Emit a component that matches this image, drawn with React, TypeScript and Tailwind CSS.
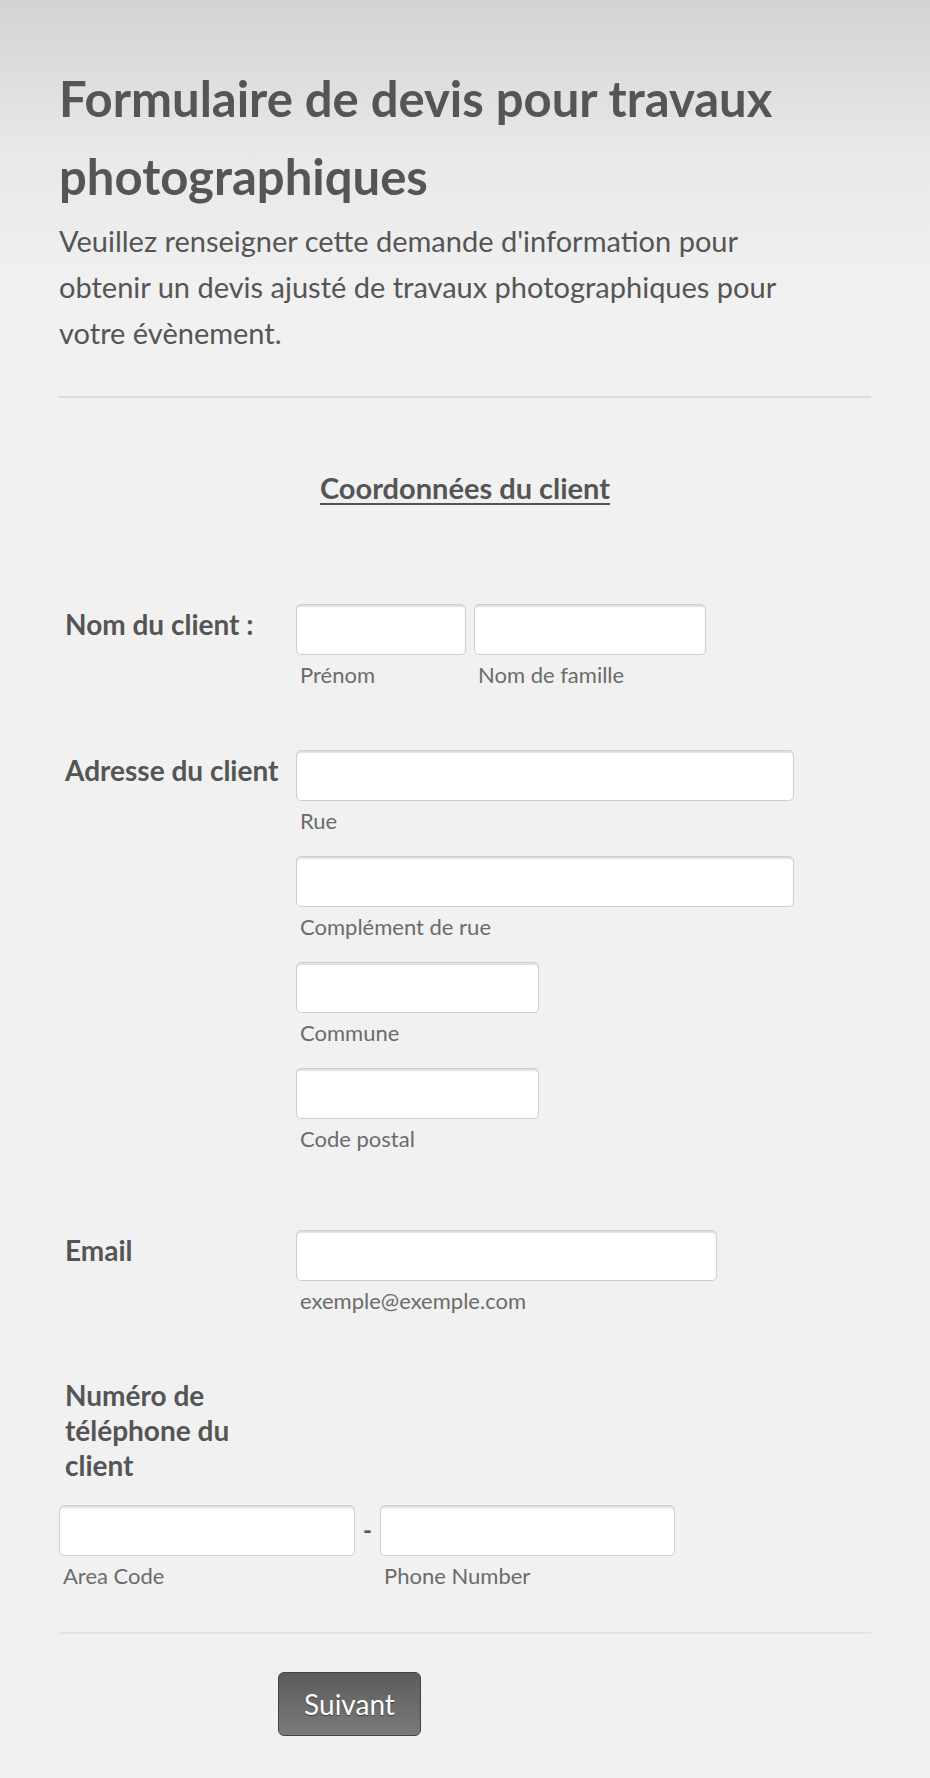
import React from "react";

function Field({ w, sub }: { w: string; sub?: string }) {
  return (
    <div className="flex flex-col">
      <div
        className={`${w} h-[51px] rounded-[5px] border border-[#cfcfcf] bg-white shadow-[inset_0_2px_1px_rgba(0,0,0,0.12)]`}
      />
      {sub && <div className="mt-[7px] pl-[4px] text-[22px] leading-[26px] text-[#6b6b6b]">{sub}</div>}
    </div>
  );
}

export default function App() {
  return (
    <div
      className="min-h-[1778px] w-full bg-[linear-gradient(to_bottom,#d3d3d3_0px,#e9e9e9_160px,#f1f1f1_300px,#f1f1f1_100%)] px-[59px] text-[#555]"
      style={{ fontFamily: "Lato, 'Open Sans', sans-serif" }}
    >
      <h1 className="pt-[59px] text-[49px] font-bold leading-[78px]">
        Formulaire de devis pour travaux photographiques
      </h1>
      <p className="mt-[3px] max-w-[760px] text-[29px] leading-[46px] text-[#555]">
        Veuillez renseigner cette demande d'information pour obtenir un devis ajusté de travaux photographiques pour
        votre évènement.
      </p>
      <div className="mt-[40px] h-[2px] bg-[#dcdcdc]" />

      <h2 className="mt-[72px] text-center text-[29px] font-bold leading-[36px] underline underline-offset-[4px] decoration-[2px]">
        Coordonnées du client
      </h2>

      {/* nom */}
      <div className="mt-[98px] flex">
        <div className="w-[237px] shrink-0 pl-[6px] pt-[3px] text-[28px] font-bold leading-[34px]">Nom du client :</div>
        <div className="flex gap-[8px]">
          <Field w="w-[170px]" sub="Prénom" />
          <Field w="w-[232px]" sub="Nom de famille" />
        </div>
      </div>

      {/* adresse */}
      <div className="mt-[62px] flex">
        <div className="w-[237px] shrink-0 pl-[6px] pt-[3px] text-[28px] font-bold leading-[34px]">Adresse du client</div>
        <div className="flex flex-col gap-[22px]">
          <Field w="w-[498px]" sub="Rue" />
          <Field w="w-[498px]" sub="Complément de rue" />
          <Field w="w-[243px]" sub="Commune" />
          <Field w="w-[243px]" sub="Code postal" />
        </div>
      </div>

      {/* email */}
      <div className="mt-[78px] flex">
        <div className="w-[237px] shrink-0 pl-[6px] pt-[3px] text-[28px] font-bold leading-[34px]">Email</div>
        <Field w="w-[421px]" sub="exemple@exemple.com" />
      </div>

      {/* telephone */}
      <div className="mt-[64px] w-[200px] pl-[6px] text-[28px] font-bold leading-[35px]">
        Numéro de téléphone du client
      </div>
      <div className="mt-[22px] flex items-start">
        <Field w="w-[296px]" sub="Area Code" />
        <div className="w-[25px] pt-[10px] text-center text-[24px] font-bold leading-[30px]">-</div>
        <Field w="w-[295px]" sub="Phone Number" />
      </div>

      <div className="mt-[43px] h-[2px] bg-[#e3e3e3]" />

      <div className="mt-[38px] pl-[219px]">
        <button className="h-[64px] w-[143px] rounded-[6px] border border-[#444] bg-[linear-gradient(to_bottom,#5c5c5c,#7a7a7a)] text-[28px] leading-[32px] text-white [text-shadow:0_1px_1px_rgba(0,0,0,0.5)]">
          Suivant
        </button>
      </div>
    </div>
  );
}
